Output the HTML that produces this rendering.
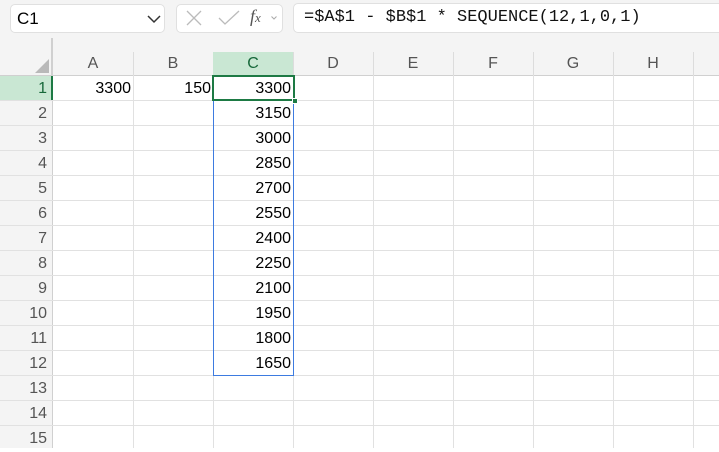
<!DOCTYPE html><html><head><style>
body{margin:0;width:719px;height:448px;overflow:hidden;background:#fff;font-family:"Liberation Sans",sans-serif;position:relative}
.a{position:absolute;box-sizing:border-box}
.ch{position:absolute;top:52px;height:23px;width:80px;text-align:center;line-height:24px;font-size:16px;color:#555;border-right:1px solid #dcdcdc}
.rh{position:absolute;left:0;width:53px;height:25px;text-align:right;padding-right:6px;box-sizing:border-box;line-height:26px;font-size:16px;color:#555}
.hl{position:absolute;left:53px;right:0;height:1px;background:#e1e1e1}
.vl{position:absolute;top:75px;bottom:0;width:1px;background:#e1e1e1}
.c{position:absolute;font-size:16px;color:#000;text-align:right;line-height:26px;height:25px;z-index:3}
</style></head><body>
<div class="a" style="left:0;top:0;width:719px;height:75px;background:#f4f4f4"></div>
<div class="a" style="left:10px;top:4px;width:155px;height:29px;background:#fff;border:1px solid #e0e0e0;border-radius:5px;font-size:17px;line-height:27px;padding-left:6px">C1</div>
<svg class="a" style="left:147px;top:15px" width="14" height="9"><path d="M1 1 L7 7 L13 1" fill="none" stroke="#333" stroke-width="1.5"/></svg>
<div class="a" style="left:176px;top:4px;width:107px;height:29px;background:#fff;border:1px solid #e0e0e0;border-radius:5px"></div>
<svg class="a" style="left:186px;top:10px" width="16" height="16"><path d="M1 1L15 15M15 1L1 15" stroke="#bbb" stroke-width="1.3"/></svg>
<svg class="a" style="left:218px;top:10px" width="22" height="16"><path d="M1 8L7 14L21 1" fill="none" stroke="#bbb" stroke-width="1.3"/></svg>
<div class="a" style="left:250px;top:6px;font-family:'Liberation Serif',serif;font-style:italic;font-size:18px;color:#555">f<span style="font-size:13px">x</span></div>
<svg class="a" style="left:271px;top:16px" width="6" height="4"><path d="M0.5 0.5L3 3L5.5 0.5" fill="none" stroke="#aaa"/></svg>
<div class="a" style="left:293px;top:3px;width:440px;height:30px;background:#fff;border:1px solid #e0e0e0;border-radius:5px;font-family:'Liberation Mono',monospace;font-size:17px;line-height:28px;padding-left:10px;color:#111">=$A$1 - $B$1 * SEQUENCE(12,1,0,1)</div>
<div class="a" style="left:51px;top:38px;width:2px;height:37px;background:#d0d0d0"></div>
<svg class="a" style="left:34px;top:58px" width="16" height="16"><path d="M15 1L15 15L1 15Z" fill="#b9b9b9"/></svg>
<div class="ch" style="left:53px">A</div><div class="ch" style="left:133px">B</div>
<div class="ch" style="left:213px;background:#c9e7d3;color:#17683a;border-bottom:1px solid #1d7a44">C</div>
<div class="ch" style="left:293px">D</div><div class="ch" style="left:373px">E</div><div class="ch" style="left:453px">F</div><div class="ch" style="left:533px">G</div><div class="ch" style="left:613px">H</div>
<div class="a" style="left:0;top:75px;width:53px;height:373px;background:#f4f4f4;border-right:1px solid #d0d0d0"></div>
<div class="a" style="left:0;top:75px;width:719px;height:1px;background:#d0d0d0"></div>
<div class="a" style="left:0;top:76px;width:53px;height:24px;background:#c9e7d3;border-right:2px solid #1d7a44"></div>
<div class="rh" style="top:76px;color:#17683a">1</div><div class="rh" style="top:101px">2</div><div class="rh" style="top:126px">3</div><div class="rh" style="top:151px">4</div><div class="rh" style="top:176px">5</div><div class="rh" style="top:201px">6</div><div class="rh" style="top:226px">7</div><div class="rh" style="top:251px">8</div><div class="rh" style="top:276px">9</div><div class="rh" style="top:301px">10</div><div class="rh" style="top:326px">11</div><div class="rh" style="top:351px">12</div><div class="rh" style="top:376px">13</div><div class="rh" style="top:401px">14</div><div class="rh" style="top:426px">15</div>
<div class="hl" style="top:100px;left:0"></div><div class="hl" style="top:125px;left:0"></div><div class="hl" style="top:150px;left:0"></div><div class="hl" style="top:175px;left:0"></div><div class="hl" style="top:200px;left:0"></div><div class="hl" style="top:225px;left:0"></div><div class="hl" style="top:250px;left:0"></div><div class="hl" style="top:275px;left:0"></div><div class="hl" style="top:300px;left:0"></div><div class="hl" style="top:325px;left:0"></div><div class="hl" style="top:350px;left:0"></div><div class="hl" style="top:375px;left:0"></div><div class="hl" style="top:400px;left:0"></div><div class="hl" style="top:425px;left:0"></div>
<div class="vl" style="left:133px"></div><div class="vl" style="left:213px"></div><div class="vl" style="left:293px"></div><div class="vl" style="left:373px"></div><div class="vl" style="left:453px"></div><div class="vl" style="left:533px"></div><div class="vl" style="left:613px"></div><div class="vl" style="left:693px"></div>
<div class="a" style="left:213px;top:76px;width:81px;height:300px;border:1px solid #3d7be0;z-index:2"></div>
<div class="a" style="left:212px;top:75px;width:83px;height:26px;border:2px solid #1d7a44;background:#fff;z-index:2"></div>
<div class="a" style="left:292px;top:98px;width:6px;height:6px;background:#1d7a44;border:1px solid #fff;z-index:4"></div>
<div class="c" style="left:53px;top:76px;width:78px">3300</div>
<div class="c" style="left:133px;top:76px;width:78px">150</div>
<div class="c" style="left:213px;top:76px;width:78px">3300</div>
<div class="c" style="left:213px;top:101px;width:78px">3150</div>
<div class="c" style="left:213px;top:126px;width:78px">3000</div>
<div class="c" style="left:213px;top:151px;width:78px">2850</div>
<div class="c" style="left:213px;top:176px;width:78px">2700</div>
<div class="c" style="left:213px;top:201px;width:78px">2550</div>
<div class="c" style="left:213px;top:226px;width:78px">2400</div>
<div class="c" style="left:213px;top:251px;width:78px">2250</div>
<div class="c" style="left:213px;top:276px;width:78px">2100</div>
<div class="c" style="left:213px;top:301px;width:78px">1950</div>
<div class="c" style="left:213px;top:326px;width:78px">1800</div>
<div class="c" style="left:213px;top:351px;width:78px">1650</div>
</body></html>
